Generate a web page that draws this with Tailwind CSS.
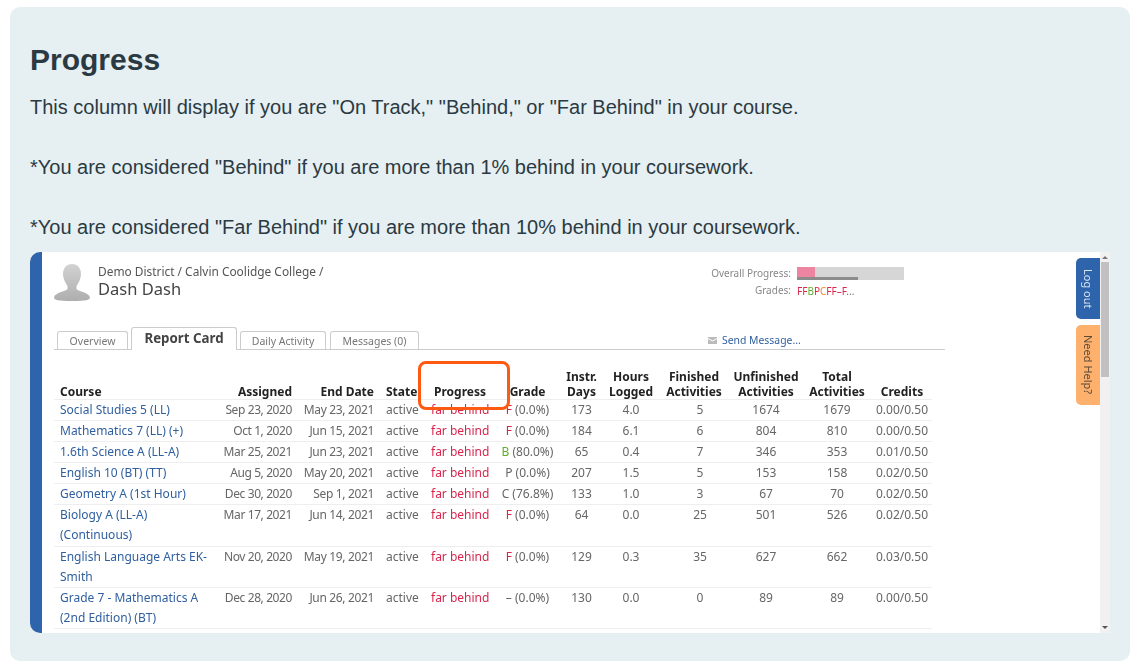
<!DOCTYPE html>
<html>
<head>
    <meta charset="utf-8">
    <title>Progress</title>
    <script src="https://cdn.jsdelivr.net/npm/@tailwindcss/browser@4"></script>
    <meta name="viewport" content="width=device-width, initial-scale=1.0">
</head>
<body class="bg-white font-['Liberation_Sans',Arial,sans-serif] h-[670px] overflow-hidden">
    <div class="mx-[10px] mt-[7px] w-[1120px] h-[654px] bg-[#e6eff2] rounded-[10px] px-5 pt-[35px] text-[#2b3a42]">
        <h2 class="text-[30px] leading-[36px] font-bold">Progress</h2>
        <p class="mt-[14px] text-[20px] leading-[30px]">This column will display if you are "On Track," "Behind," or "Far Behind" in your course.</p>
        <p class="mt-[30px] text-[20px] leading-[30px]">*You are considered "Behind" if you are more than 1% behind in your coursework.</p>
        <p class="mt-[30px] text-[20px] leading-[30px]">*You are considered "Far Behind" if you are more than 10% behind in your coursework.</p>

        <!-- embedded screenshot of the report card -->
        <div class="relative mt-[10px] w-[1080px] h-[381px] bg-white rounded-l-[10px] overflow-hidden flex blur-[0.3px] font-['Noto_Sans',sans-serif] text-[12px] text-[#666]">
            <div class="w-3 shrink-0 bg-[#2e64ab]"></div>
            <div class="w-[903px] shrink-0 pl-3">
                <div class="flex justify-between h-[75px]">
                    <div class="flex pt-3">
                        <svg class="w-[36px] h-[37px]" viewBox="0 0 36 37">
                            <defs><linearGradient id="av" x1="0" y1="0" x2="0" y2="1"><stop offset="0" stop-color="#d2d2d2"/><stop offset="1" stop-color="#aeaeae"/></linearGradient></defs>
                            <path fill="url(#av)" d="M18 0c5.500 0 9 4 9 10 0 5-2.500 9-4.500 12v3c2 2.500 13 3.500 13.500 8.500 0 2.500-4 3.500-18 3.500S0 36 0 33.500c.5-5 11.500-6 13.500-8.500v-3C11.500 19 9 15 9 10 9 4 12.500 0 18 0z"/>
                        </svg>
                        <div class="ml-2">
                            <div class="leading-[15px] text-[#555] text-[11.9px]">Demo District / Calvin Coolidge College /</div>
                            <div class="text-[16.5px] leading-[20px] text-[#444]">Dash Dash</div>
                        </div>
                    </div>
                    <div class="pt-[14px] text-[10px] text-[#888] w-[240px] mr-[41px] whitespace-nowrap">
                        <div class="flex items-center justify-end gap-[6px]">
                            <span>Overall Progress:</span>
                            <div class="relative w-[107px] h-[13px] bg-[#d6d6d6]">
                                <div class="absolute left-0 top-0 w-[18px] h-[10px] bg-[#ee85a0]"></div>
                                <div class="absolute left-0 bottom-0 w-[61px] h-[3px] bg-[#8c8c8c]"></div>
                            </div>
                        </div>
                        <div class="flex justify-end gap-[6px] mt-[2px]">
                            <span>Grades:</span>
                            <span class="w-[107px] text-[10px] leading-[17px] text-[#d9254c]">FF<span class="text-[#5fae2e]">B</span>P<span class="text-[#ee8a2c]">C</span>FF–F<span class="text-[#777]">...</span></span>
                        </div>
                    </div>
                </div>

                <div class="flex items-end h-[23px] border-b border-[#ccc] text-[10.5px] text-[#777]">
                    <a class="ml-[3px] w-[71px] h-[19px] -mb-px leading-[18px] text-center border border-[#ccc] border-b-0 rounded-t-[3px]">Overview</a>
                    <a class="ml-[3px] w-[106px] h-[23px] -mb-px leading-[21px] text-center bg-white border border-[#ccc] border-b-0 rounded-t-[3px] text-[13.3px] font-bold text-[#444]">Report Card</a>
                    <a class="ml-[3px] w-[86px] h-[19px] -mb-px leading-[18px] text-center border border-[#ccc] border-b-0 rounded-t-[3px]">Daily Activity</a>
                    <a class="ml-1 w-[89px] h-[19px] -mb-px leading-[18px] text-center border border-[#ccc] border-b-0 rounded-t-[3px]">Messages (0)</a>
                    <div class="flex items-center ml-[289px] mb-[1px]">
                        <svg class="w-[9px] h-[7px] mr-[5px]" viewBox="0 0 9 7"><path fill="#bbb" d="M0 0h9v1L4.500 3.500 0 1zM0 2l4.500 2.500L9 2v5H0z"/></svg>
                        <span class="text-[#2f5f9f] text-[10.4px] leading-[16px]">Send Message...</span>
                    </div>
                </div>

                <table class="mt-[19px] w-[878px] table-fixed border-collapse leading-[20px]">
                    <thead class="text-[#222] font-bold leading-[15px]">
                        <tr class="align-bottom">
                            <th class="w-[158px] pl-[6px] text-left">Course</th>
                            <th class="w-[86px] pr-[6px] text-right">Assigned</th>
                            <th class="w-[82px] pr-[6px] text-right">End Date</th>
                            <th class="w-[44px] pl-[6px] text-left">State</th>
                            <th class="w-[72px] text-center">Progress</th>
                            <th class="w-[63px] text-center">Grade</th>
                            <th class="w-[45px] text-center">Instr.<br>Days</th>
                            <th class="w-[54px] text-center">Hours<br>Logged</th>
                            <th class="w-[68px] pl-[4px] text-center">Finished<br>Activities</th>
                            <th class="w-[80px] text-center">Unfinished<br>Activities</th>
                            <th class="w-[62px] text-center">Total<br>Activities</th>
                            <th class="w-[64px] pl-[4px] text-center">Credits</th>
                        </tr>
                    </thead>
                    <tbody id="rows"></tbody>
                </table>
            </div>

            <div class="ml-[131px] pt-[6px] w-6 shrink-0 flex flex-col gap-[6px]">
                <div class="h-[61px] bg-[#2e64ab] rounded-l-[5px] text-[#dbe6f3] text-[11px] flex items-center justify-center [writing-mode:vertical-rl]">Log out</div>
                <div class="h-[80px] bg-[#fdb16d] rounded-l-[5px] text-[#5a4a3a] text-[11px] flex items-center justify-center [writing-mode:vertical-rl]">Need Help?</div>
            </div>

            <!-- scrollbar -->
            <div class="relative w-[10px] shrink-0 bg-[#f1f1f1]">
                <div class="absolute left-[1px] top-[10px] w-2 h-[115px] bg-[#c1c1c1]"></div>
                <div class="absolute left-[2px] top-[4px] w-0 h-0 border-x-[3px] border-x-transparent border-b-[3px] border-b-[#777]"></div>
                <div class="absolute left-[2px] bottom-[4px] w-0 h-0 border-x-[3px] border-x-transparent border-t-[3px] border-t-[#555]"></div>
            </div>

            <!-- highlight drawn over the table -->
            <div class="absolute left-[388px] top-[109px] w-[92px] h-[49px] border-[3px] border-[#ff5a12] rounded-[8px]"></div>
        </div>
    </div>

    <script>
    const courses = [
        ['Social Studies 5 (LL)', 'Sep 23, 2020', 'May 23, 2021', 'F', '(0.0%)', 173, '4.0', 5, 1674, 1679, '0.00/0.50'],
        ['Mathematics 7 (LL) (+)', 'Oct 1, 2020', 'Jun 15, 2021', 'F', '(0.0%)', 184, '6.1', 6, 804, 810, '0.00/0.50'],
        ['1.6th Science A (LL-A)', 'Mar 25, 2021', 'Jun 23, 2021', 'B', '(80.0%)', 65, '0.4', 7, 346, 353, '0.01/0.50'],
        ['English 10 (BT) (TT)', 'Aug 5, 2020', 'May 20, 2021', 'P', '(0.0%)', 207, '1.5', 5, 153, 158, '0.02/0.50'],
        ['Geometry A (1st Hour)', 'Dec 30, 2020', 'Sep 1, 2021', 'C', '(76.8%)', 133, '1.0', 3, 67, 70, '0.02/0.50'],
        ['Biology A (LL-A) (Continuous)', 'Mar 17, 2021', 'Jun 14, 2021', 'F', '(0.0%)', 64, '0.0', 25, 501, 526, '0.02/0.50'],
        ['English Language Arts EK-Smith', 'Nov 20, 2020', 'May 19, 2021', 'F', '(0.0%)', 129, '0.3', 35, 627, 662, '0.03/0.50'],
        ['Grade 7 - Mathematics A (2nd Edition) (BT)', 'Dec 28, 2020', 'Jun 26, 2021', '–', '(0.0%)', 130, '0.0', 0, 89, 89, '0.00/0.50']
    ];
    const gradeColors = { F: 'text-[#d9254c]', B: 'text-[#5fae2e]', C: 'text-[#666]', P: 'text-[#666]', '–': 'text-[#666]' };

    document.getElementById('rows').innerHTML = courses.map((c, i) => `
        <tr class="align-top border-t border-[#eee] ${i === 5 ? 'h-[42px]' : ''}">
            <td class="pl-[6px] text-[#2f5f9f]">${c[0]}</td>
            <td class="pr-[6px] text-right whitespace-nowrap tracking-[-0.4px]">${c[1]}</td>
            <td class="pr-[6px] text-right whitespace-nowrap tracking-[-0.35px]">${c[2]}</td>
            <td class="pl-[6px]">active</td>
            <td class="pl-[7px] text-[#d9254c] whitespace-nowrap">far behind</td>
            <td class="text-center whitespace-nowrap"><span class="${gradeColors[c[3]]}">${c[3]}</span> ${c[4]}</td>
            <td class="text-center">${c[5]}</td>
            <td class="text-center">${c[6]}</td>
            <td class="pl-[16px] text-center">${c[7]}</td>
            <td class="text-center">${c[8]}</td>
            <td class="text-center">${c[9]}</td>
            <td class="pl-[4px] text-center">${c[10]}</td>
        </tr>`).join('') + '<tr class="border-t border-[#eee]"><td colspan="12" class="h-[21px]"></td></tr>';
    </script>
</body>
</html>
